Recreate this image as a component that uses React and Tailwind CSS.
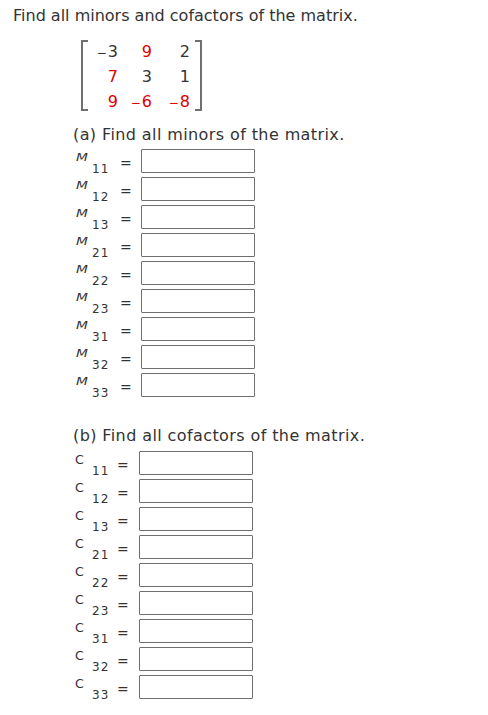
import React from "react";

const red = "text-[#e00000]";

function Row({ letter, sub, subLeft, eqLeft, boxLeft, italic }) {
  return (
    <div className="flex h-[24px]">
      <div className="relative h-[24px] shrink-0" style={{ width: boxLeft }}>
        <span className={"absolute leading-none inline-block origin-left " + (italic ? "left-[1px] top-[3px] text-[11px] italic scale-x-[1.25]" : "left-[0px] top-[3px] text-[12.5px]")}>{letter}</span>
        <span className="absolute top-[14px] text-[12px] leading-none tracking-[1.2px]" style={{ left: subLeft }}>{sub}</span>
        <span className="absolute top-[7px] text-[14px] leading-none" style={{ left: eqLeft }}>=</span>
      </div>
      <div className="w-[114px] h-[24px] border border-[#6f6f6f] rounded-[1px] bg-white" />
    </div>
  );
}

function Entry({ v, r }) {
  const neg = v.startsWith("-");
  const d = neg ? v.slice(1) : v;
  return (
    <span className={"text-right " + (r ? red : "")}>
      {neg && <span className="text-[12px] mr-[1px]">−</span>}
      {d}
    </span>
  );
}

export default function App() {
  const subs = ["11", "12", "13", "21", "22", "23", "31", "32", "33"];
  const m = [
    [["-3", false], ["9", true], ["2", false]],
    [["7", true], ["3", false], ["1", false]],
    [["9", true], ["-6", true], ["-8", true]],
  ];
  return (
    <div className="w-[488px] h-[715px] bg-white text-[#333] overflow-hidden" style={{ fontFamily: '"DejaVu Sans", Verdana, sans-serif' }}>
      <div className="pl-[13px] pt-[6px] text-[16px] leading-[20px]">Find all minors and cofactors of the matrix.</div>
      <div className="ml-[81px] mt-[14px] flex h-[71px] w-[121px]">
        <div className="w-[7px] border-l-2 border-t-2 border-b-2 border-[#707070]" />
        <div className="-mt-[1px] flex flex-col text-[16px]">
          {m.map((row, i) => (
            <div key={i} className="h-[25px] leading-[25px] grid grid-cols-[30px_34px_38px]">
              {row.map(([v, r], j) => (
                <Entry key={j} v={v} r={r} />
              ))}
            </div>
          ))}
        </div>
        <div className="w-[7px] ml-[5px] border-r-2 border-t-2 border-b-2 border-[#707070]" />
      </div>
      <div className="ml-[73px] mt-[14px] text-[16px] leading-[20px] tracking-[0.4px]">(a) Find all minors of the matrix.</div>
      <div className="ml-[75px] mt-[4px] flex flex-col gap-[4px]">
        {subs.map((s) => (
          <Row key={s} letter="M" sub={s} subLeft={17} eqLeft={45} boxLeft={66} italic />
        ))}
      </div>
      <div className="ml-[73px] mt-[29px] text-[16px] leading-[20px] tracking-[0.4px]">(b) Find all cofactors of the matrix.</div>
      <div className="ml-[75px] mt-[5px] flex flex-col gap-[4px]">
        {subs.map((s) => (
          <Row key={s} letter="C" sub={s} subLeft={17} eqLeft={42} boxLeft={64} />
        ))}
      </div>
    </div>
  );
}
